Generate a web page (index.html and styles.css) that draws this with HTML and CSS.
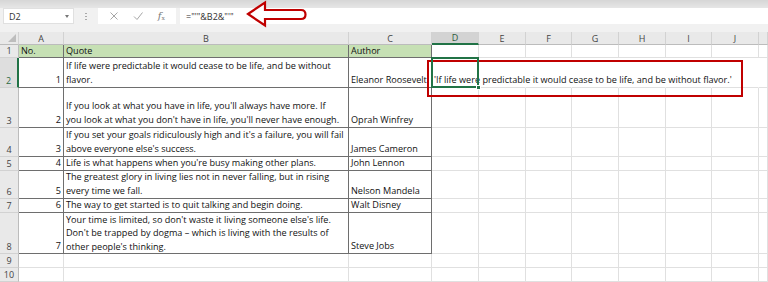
FILE: index.html
```html
<!DOCTYPE html>
<html>
<head>
<meta charset="utf-8">
<link rel="stylesheet" href="styles.css">
</head>
<body>
<div class="app">
  <div class="topstrip"></div>
  <div class="fbar">
    <div class="namebox"><span>D2</span><span class="dd"></span></div>
    <div class="sep"><span class="dots"></span></div>
    <div class="btns">
      <svg class="ic" viewBox="0 0 10 10" width="10" height="10"><path d="M1.5 1.5 L8.5 8.5 M8.5 1.5 L1.5 8.5" stroke="#a6a6a6" stroke-width="1" fill="none"/></svg>
      <svg class="ic" viewBox="0 0 10 10" width="10" height="10"><path d="M1 5.5 L4 8.5 L9.5 1.5" stroke="#a6a6a6" stroke-width="1" fill="none"/></svg>
      <span class="fx"><i>f</i><sub>x</sub></span>
    </div>
    <div class="formula">="'"&amp;B2&amp;"'"</div>
  </div>
  <div class="gap"></div>
  <div class="sheet">
    <div class="ch corner"><span class="tri"></span></div>
    <div class="ch">A</div><div class="ch">B</div><div class="ch">C</div><div class="ch chsel">D</div><div class="ch">E</div><div class="ch">F</div><div class="ch">G</div><div class="ch">H</div><div class="ch">I</div><div class="ch">J</div><div class="ch"></div>

    <div class="rh r1">1</div>
    <div class="c t g">No.</div><div class="c t g">Quote</div><div class="c t g">Author</div>
    <div class="c"></div><div class="c"></div><div class="c"></div><div class="c"></div><div class="c"></div><div class="c"></div><div class="c"></div><div class="c"></div>

    <div class="rh rhsel">2</div>
    <div class="c t n">1</div>
    <div class="c t">If life were predictable it would cease to be life, and be without<br>flavor.</div>
    <div class="c t">Eleanor Roosevelt</div>
    <div class="c sel">'If life were predictable it would cease to be life, and be without flavor.'</div>
    <div class="c ov"></div><div class="c ov"></div><div class="c ov"></div><div class="c ov"></div><div class="c ov"></div><div class="c ov"></div><div class="c"></div>

    <div class="rh">3</div>
    <div class="c t n">2</div>
    <div class="c t">If you look at what you have in life, you'll always have more. If<br>you look at what you don't have in life, you'll never have enough.</div>
    <div class="c t">Oprah Winfrey</div>
    <div class="c"></div><div class="c"></div><div class="c"></div><div class="c"></div><div class="c"></div><div class="c"></div><div class="c"></div><div class="c"></div>

    <div class="rh">4</div>
    <div class="c t n">3</div>
    <div class="c t">If you set your goals ridiculously high and it's a failure, you will fail<br>above everyone else's success.</div>
    <div class="c t">James Cameron</div>
    <div class="c"></div><div class="c"></div><div class="c"></div><div class="c"></div><div class="c"></div><div class="c"></div><div class="c"></div><div class="c"></div>

    <div class="rh">5</div>
    <div class="c t n">4</div>
    <div class="c t">Life is what happens when you're busy making other plans.</div>
    <div class="c t">John Lennon</div>
    <div class="c"></div><div class="c"></div><div class="c"></div><div class="c"></div><div class="c"></div><div class="c"></div><div class="c"></div><div class="c"></div>

    <div class="rh">6</div>
    <div class="c t n">5</div>
    <div class="c t">The greatest glory in living lies not in never falling, but in rising<br>every time we fall.</div>
    <div class="c t">Nelson Mandela</div>
    <div class="c"></div><div class="c"></div><div class="c"></div><div class="c"></div><div class="c"></div><div class="c"></div><div class="c"></div><div class="c"></div>

    <div class="rh">7</div>
    <div class="c t n">6</div>
    <div class="c t">The way to get started is to quit talking and begin doing.</div>
    <div class="c t">Walt Disney</div>
    <div class="c"></div><div class="c"></div><div class="c"></div><div class="c"></div><div class="c"></div><div class="c"></div><div class="c"></div><div class="c"></div>

    <div class="rh">8</div>
    <div class="c t n">7</div>
    <div class="c t tight">Your time is limited, so don't waste it living someone else's life.<br>Don't be trapped by dogma – which is living with the results of<br>other people's thinking.</div>
    <div class="c t">Steve Jobs</div>
    <div class="c"></div><div class="c"></div><div class="c"></div><div class="c"></div><div class="c"></div><div class="c"></div><div class="c"></div><div class="c"></div>

    <div class="rh">9</div>
    <div class="c"></div><div class="c"></div><div class="c"></div><div class="c"></div><div class="c"></div><div class="c"></div><div class="c"></div><div class="c"></div><div class="c"></div><div class="c"></div><div class="c"></div>

    <div class="rh">10</div>
    <div class="c"></div><div class="c"></div><div class="c"></div><div class="c"></div><div class="c"></div><div class="c"></div><div class="c"></div><div class="c"></div><div class="c"></div><div class="c"></div><div class="c"></div>
  </div>

  <svg class="arrow" viewBox="0 0 66 30" width="66" height="30">
    <path d="M4 14 L21 2.5 L21 10 L57 10 Q61.5 10 61.5 14.5 Q61.5 19 57 19 L21 19 L21 25.5 Z" fill="#fff" stroke="#c00000" stroke-width="2.2" stroke-linejoin="miter"/>
  </svg>
  <div class="callout"></div>
</div>
</body>
</html>
```

FILE: styles.css
```css
html, body {
  margin: 0;
  padding: 0;
  background: #fff;
}

.app {
  position: relative;
  width: 768px;
  height: 282px;
  overflow: hidden;
  background: #f1f1f1;
  font-family: "Open Sans", "Noto Sans", sans-serif;
  color: #111;
}

.topstrip {
  height: 8px;
  background: linear-gradient(#d6d6d6, #e6e6e6);
}

.fbar {
  height: 16px;
  display: flex;
  align-items: stretch;
  background: #f1f1f1;
}

.namebox {
  margin-left: 3px;
  width: 71px;
  box-sizing: border-box;
  background: #fff;
  border: 1px solid #e0e0e0;
  display: flex;
  align-items: center;
  justify-content: space-between;
  padding: 0 4px 0 5px;
  font-size: 9px;
  color: #333;
}

.dd {
  width: 0;
  height: 0;
  border-left: 2.5px solid transparent;
  border-right: 2.5px solid transparent;
  border-top: 3px solid #777;
}

.sep {
  width: 24px;
  display: flex;
  align-items: center;
  justify-content: center;
}

.dots {
  width: 2px;
  height: 9px;
  background: radial-gradient(circle, #a8a8a8 0.8px, transparent 1px) 0 0 / 2px 3px repeat-y;
}

.btns {
  width: 78px;
  background: #fff;
  display: flex;
  align-items: center;
  justify-content: space-around;
  padding: 0 4px;
  box-sizing: border-box;
}

.ic {
  display: block;
}

.fx {
  font-family: "DejaVu Serif", "Liberation Serif", serif;
  font-size: 10px;
  color: #7a7a7a;
  line-height: 1;
}

.fx sub {
  font-size: 6px;
  vertical-align: -1px;
}

.formula {
  margin-left: 4px;
  flex: 1;
  background: #fff;
  padding-left: 6px;
  font-size: 9px;
  display: flex;
  align-items: center;
  color: #333;
}

.gap {
  height: 8px;
}

.sheet {
  display: grid;
  grid-template-columns: 19px 45px 285px 83px 47px 47px 46px 47px 47px 46px 47px 9px;
  grid-template-rows: 13px 13px 30px 40px 29px 14px 28px 14px 41px 14px 14px;
  background: #fff;
}

.sheet > div {
  box-sizing: border-box;
  display: flex;
  white-space: nowrap;
  overflow: hidden;
}

.ch {
  background: #e9e9e9;
  border-right: 1px solid #d2d2d2;
  border-bottom: 1px solid #bcbcbc;
  align-items: center;
  justify-content: center;
  font-size: 9px;
  color: #444;
}

.corner {
  position: relative;
}

.tri {
  position: absolute;
  right: 2px;
  bottom: 2px;
  width: 0;
  height: 0;
  border-left: 8px solid transparent;
  border-bottom: 8px solid #bdbdbd;
}

.chsel {
  background: #d3d3d3;
  border-bottom: 2px solid #217346;
  color: #2b5a3d;
}

.rh {
  background: #e9e9e9;
  border-right: 1px solid #bcbcbc;
  border-bottom: 1px solid #d2d2d2;
  align-items: flex-end;
  justify-content: center;
  font-size: 9px;
  line-height: 13px;
  color: #444;
}

.rh.r1 {
  line-height: 12px;
}

.rhsel {
  background: #dedede;
  border-right: 2px solid #217346;
  color: #2b6a43;
}

.c {
  border-right: 1px solid #e0e0e0;
  border-bottom: 1px solid #e0e0e0;
  align-items: flex-end;
  padding: 0 2px;
  font-size: 9.1px;
  line-height: 14px;
}

.t {
  border-right-color: #6e6e6e;
  border-bottom-color: #6e6e6e;
}

.g {
  background: #c6e0b4;
  line-height: 12px;
}

.tight {
  line-height: 13.3px;
}

.n {
  justify-content: flex-end;
}

.sheet > .sel {
  position: relative;
  z-index: 2;
  overflow: visible;
}

.sel::after {
  content: "";
  position: absolute;
  left: -1px;
  top: -1px;
  right: -1px;
  bottom: -1px;
  border: 2px solid #217346;
}

.sel::before {
  content: "";
  position: absolute;
  right: -3px;
  bottom: -3px;
  width: 3px;
  height: 3px;
  background: #217346;
  border: 1px solid #fff;
  z-index: 3;
}

.ov {
  border-right-color: transparent;
}

.arrow {
  position: absolute;
  left: 244px;
  top: 0;
}

.callout {
  position: absolute;
  left: 427px;
  top: 60px;
  width: 316px;
  height: 37px;
  box-sizing: border-box;
  border: 2px solid #c00000;
}
```
